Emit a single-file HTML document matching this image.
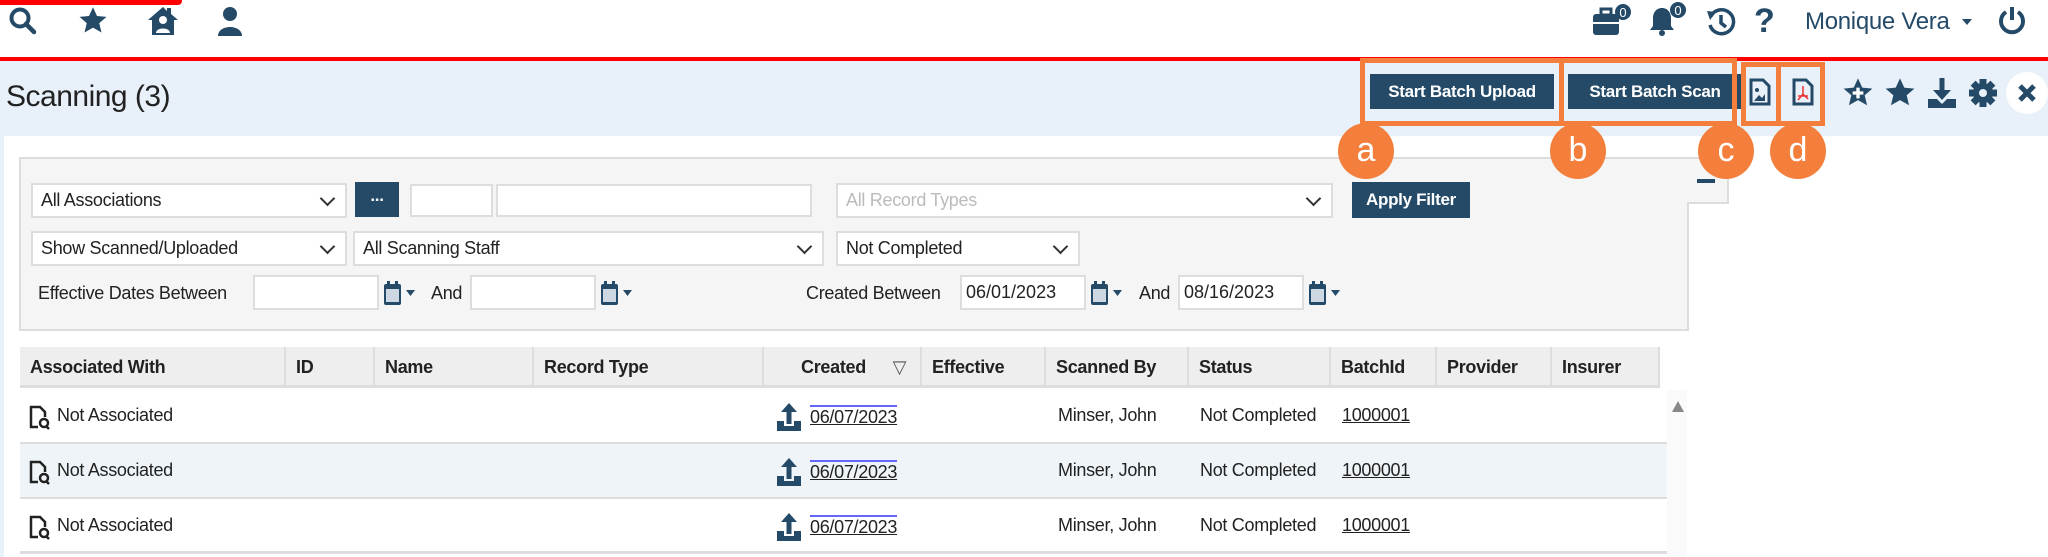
<!DOCTYPE html>
<html><head><meta charset="utf-8"><style>
*{box-sizing:border-box;margin:0;padding:0}
body{width:2048px;height:557px;overflow:hidden;background:#fff;font-family:"Liberation Sans Narrow","Liberation Sans",sans-serif;color:#222;position:relative}
.a{position:absolute}
.ic{fill:#244a68}
.sel{position:absolute;background:#fff;border:2px solid #ddd;font-size:18px;padding:0 8px;line-height:30px;color:#222;letter-spacing:-0.3px}
.sel:after{content:"";position:absolute;right:12px;top:8px;width:9px;height:9px;border-right:2px solid #333;border-bottom:2px solid #333;transform:rotate(45deg)}
.inp{position:absolute;background:#fff;border:2px solid #ddd;font-size:18px;padding:0 4px;line-height:30px}
.btn{position:absolute;background:#244a68;color:#fff;font-weight:bold;font-size:17px;text-align:center;font-family:"Liberation Sans",sans-serif;letter-spacing:-0.3px;white-space:nowrap}
.ob{position:absolute;border:5px solid #f47f3c}
.cir{position:absolute;width:56px;height:56px;border-radius:50%;background:#f47f3c;color:#fff;font-size:34px;text-align:center;line-height:54px;font-family:"Liberation Sans",sans-serif}
.lbl{position:absolute;font-size:18px;letter-spacing:-0.3px}
.th{position:absolute;top:347px;height:41px;line-height:41px;font-weight:bold;font-size:18px;border-right:2px solid #ddd;padding-left:10px;letter-spacing:-0.3px;white-space:nowrap}
.td{position:absolute;font-size:18px;letter-spacing:-0.3px;white-space:nowrap}
.u{text-decoration:underline}
</style></head><body>
<div class="a" style="left:0;top:0;width:182px;height:5px;background:#f00;border-radius:0 0 4px 0"></div>
<svg class="a" style="left:8px;top:6px" width="30" height="30" viewBox="0 0 30 30"><circle cx="12" cy="12" r="8.5" fill="none" stroke="#244a68" stroke-width="4"/><path d="M18 18l8 8" stroke="#244a68" stroke-width="4.5" stroke-linecap="round"/></svg>
<svg class="a" style="left:78px;top:6px" width="30" height="30" viewBox="0 0 24 24"><path class="ic" d="M12 1l3.2 7 7.6.7-5.8 5 1.8 7.5L12 17.3 5.2 21.2 7 13.7 1.2 8.7l7.6-.7z"/></svg>
<svg class="a" style="left:147px;top:6px" width="32" height="30" viewBox="0 0 32 30"><path class="ic" d="M16 1L1 14h4v15h22V14h4L24 8V2h-4v3z"/><circle cx="16" cy="14" r="4" fill="#fff"/><path d="M9 27c0-6 14-6 14 0z" fill="#fff"/></svg>
<svg class="a" style="left:216px;top:6px" width="28" height="30" viewBox="0 0 28 30"><circle class="ic" cx="14" cy="8" r="7"/><path class="ic" d="M2 30c0-12 24-12 24 0z"/></svg>
<svg class="a" style="left:1592px;top:4px" width="40" height="32" viewBox="0 0 40 32"><rect class="ic" x="1" y="10" width="26" height="21" rx="3"/><rect x="9" y="5" width="10" height="6" fill="none" stroke="#244a68" stroke-width="3"/><rect x="1" y="18" width="26" height="2" fill="#fff"/><circle cx="31" cy="8" r="8" fill="#244a68"/><text x="31" y="13" font-size="13" fill="#fff" text-anchor="middle" font-family="Liberation Sans">0</text></svg>
<svg class="a" style="left:1648px;top:2px" width="40" height="34" viewBox="0 0 40 34"><path class="ic" d="M14 6c-6 0-9 5-9 10v8l-3 4h24l-3-4v-8c0-5-3-10-9-10z"/><circle class="ic" cx="14" cy="31" r="3"/><circle cx="30" cy="8" r="8" fill="#244a68"/><text x="30" y="13" font-size="13" fill="#fff" text-anchor="middle" font-family="Liberation Sans">0</text></svg>
<svg class="a" style="left:1706px;top:7px" width="30" height="30" viewBox="0 0 30 30"><path d="M5 9a12 12 0 1 1-1 9" fill="none" stroke="#244a68" stroke-width="3.5"/><path class="ic" d="M1 4l9 1-6 8z"/><path d="M15 8v8l5 4" fill="none" stroke="#244a68" stroke-width="3.5"/></svg>
<div class="a" style="left:1754px;top:2px;font-size:34px;font-weight:bold;color:#244a68;font-family:'Liberation Sans',sans-serif">?</div>
<div class="a" style="left:1805px;top:8px;font-size:24px;color:#244a68;letter-spacing:-0.3px">Monique Vera</div>
<div class="a" style="left:1962px;top:19px;border-left:5px solid transparent;border-right:5px solid transparent;border-top:6px solid #244a68"></div>
<svg class="a" style="left:1997px;top:5px" width="30" height="32" viewBox="0 0 30 32"><path d="M9 7a11 11 0 1 0 12 0" fill="none" stroke="#244a68" stroke-width="4"/><path d="M15 2v13" stroke="#244a68" stroke-width="4"/></svg>
<div class="a" style="left:0;top:57px;width:2048px;height:4px;background:#f00"></div>
<div class="a" style="left:0;top:61px;width:2048px;height:75px;background:#e8f1f9"></div>
<div class="a" style="left:6px;top:80px;font-size:30px;color:#222;letter-spacing:-0.5px">Scanning (3)</div>
<div class="btn" style="left:1370px;top:74px;width:184px;height:35px;line-height:35px">Start Batch Upload</div>
<div class="btn" style="left:1568px;top:74px;width:174px;height:35px;line-height:35px">Start Batch Scan</div>
<svg class="a" style="left:1749px;top:78px" width="22" height="28" viewBox="0 0 22 28"><path d="M2 2h12l6 6v18H2z" fill="none" stroke="#244a68" stroke-width="3"/><path class="ic" d="M5 23l5-6 3 3 3-4v7H5z"/><circle class="ic" cx="8" cy="12" r="2"/></svg>
<svg class="a" style="left:1792px;top:78px" width="22" height="28" viewBox="0 0 22 28"><path d="M2 2h12l6 6v18H2z" fill="none" stroke="#244a68" stroke-width="3"/><path d="M11 8v8l-5 6M11 16l5 5M6 18h10" stroke="#e33" stroke-width="1.5" fill="none"/></svg>
<svg class="a" style="left:1842px;top:77px" width="32" height="32" viewBox="0 0 24 24"><path class="ic" d="M12 1l3.2 7 7.6.7-5.8 5 1.8 7.5L12 17.3 5.2 21.2 7 13.7 1.2 8.7l7.6-.7z"/><path d="M12 8v8M8 12h8" stroke="#fff" stroke-width="2.5"/></svg>
<svg class="a" style="left:1884px;top:77px" width="32" height="32" viewBox="0 0 24 24"><path class="ic" d="M12 1l3.2 7 7.6.7-5.8 5 1.8 7.5L12 17.3 5.2 21.2 7 13.7 1.2 8.7l7.6-.7z"/></svg>
<svg class="a" style="left:1927px;top:77px" width="30" height="32" viewBox="0 0 30 32"><path d="M15 1v18" stroke="#244a68" stroke-width="5"/><path class="ic" d="M6 13l9 10 9-10z"/><path class="ic" d="M1 22h9l5 5 5-5h9v9H1z"/></svg>
<svg class="a" style="left:1968px;top:78px" width="30" height="30" viewBox="0 0 30 30"><g transform="translate(15 15)"><circle r="10" class="ic"/><g class="ic"><rect x="-3.5" y="-14" width="7" height="28"/><rect x="-3.5" y="-14" width="7" height="28" transform="rotate(45)"/><rect x="-3.5" y="-14" width="7" height="28" transform="rotate(90)"/><rect x="-3.5" y="-14" width="7" height="28" transform="rotate(135)"/></g><circle r="4" fill="#e8f1f9"/></g></svg>
<div class="a" style="left:2006px;top:72px;width:42px;height:42px;border-radius:50%;background:#fff"></div>
<svg class="a" style="left:2016px;top:82px" width="22" height="22" viewBox="0 0 22 22"><path d="M4 4l14 14M18 4L4 18" stroke="#244a68" stroke-width="5"/></svg>
<div class="ob" style="left:1360px;top:58px;width:204px;height:68px"></div>
<div class="ob" style="left:1559px;top:58px;width:178px;height:68px"></div>
<div class="ob" style="left:1741px;top:62px;width:40px;height:64px"></div>
<div class="ob" style="left:1776px;top:62px;width:49px;height:64px"></div>
<div class="a" style="left:0;top:136px;width:4px;height:421px;background:#e8f1f9"></div>
<div class="a" style="left:19px;top:157px;width:1670px;height:174px;background:#f5f5f5;border:2px solid #ddd"></div>
<div class="a" style="left:1687px;top:157px;width:42px;height:47px;background:#f5f5f5;border:2px solid #ddd;border-left:none"></div>
<div class="a" style="left:1697px;top:179px;width:18px;height:4px;background:#244a68"></div>
<div class="cir" style="left:1338px;top:123px">a</div>
<div class="cir" style="left:1550px;top:123px">b</div>
<div class="cir" style="left:1698px;top:123px">c</div>
<div class="cir" style="left:1770px;top:123px">d</div>
<div class="sel" style="left:31px;top:183px;width:316px;height:35px">All Associations</div>
<div class="btn" style="left:355px;top:182px;width:44px;height:35px;line-height:28px">...</div>
<div class="inp" style="left:410px;top:184px;width:83px;height:33px"></div>
<div class="inp" style="left:496px;top:184px;width:316px;height:33px"></div>
<div class="sel" style="left:836px;top:183px;width:497px;height:35px;color:#bbb">All Record Types</div>
<div class="btn" style="left:1352px;top:182px;width:118px;height:36px;line-height:36px">Apply Filter</div>
<div class="sel" style="left:31px;top:231px;width:316px;height:35px">Show Scanned/Uploaded</div>
<div class="sel" style="left:353px;top:231px;width:471px;height:35px">All Scanning Staff</div>
<div class="sel" style="left:836px;top:231px;width:244px;height:35px">Not Completed</div>
<div class="lbl" style="left:38px;top:283px">Effective Dates Between</div>
<div class="inp" style="left:253px;top:275px;width:126px;height:35px"></div>
<div class="lbl" style="left:431px;top:283px">And</div>
<div class="inp" style="left:470px;top:275px;width:126px;height:35px"></div>
<div class="lbl" style="left:806px;top:283px">Created Between</div>
<div class="inp" style="left:960px;top:275px;width:126px;height:35px">06/01/2023</div>
<div class="lbl" style="left:1139px;top:283px">And</div>
<div class="inp" style="left:1178px;top:275px;width:126px;height:35px">08/16/2023</div>
<svg class="a" style="left:383px;top:280px" width="36" height="26" viewBox="0 0 36 26"><rect x="1" y="4" width="17" height="21" rx="2" fill="#244a68"/><rect x="3" y="9" width="13" height="13" fill="#cdd8e2"/><rect x="4" y="1" width="3" height="6" fill="#244a68"/><rect x="12" y="1" width="3" height="6" fill="#244a68"/><path d="M23 10h9l-4.5 6z" fill="#244a68"/></svg>
<svg class="a" style="left:600px;top:280px" width="36" height="26" viewBox="0 0 36 26"><rect x="1" y="4" width="17" height="21" rx="2" fill="#244a68"/><rect x="3" y="9" width="13" height="13" fill="#cdd8e2"/><rect x="4" y="1" width="3" height="6" fill="#244a68"/><rect x="12" y="1" width="3" height="6" fill="#244a68"/><path d="M23 10h9l-4.5 6z" fill="#244a68"/></svg>
<svg class="a" style="left:1090px;top:280px" width="36" height="26" viewBox="0 0 36 26"><rect x="1" y="4" width="17" height="21" rx="2" fill="#244a68"/><rect x="3" y="9" width="13" height="13" fill="#cdd8e2"/><rect x="4" y="1" width="3" height="6" fill="#244a68"/><rect x="12" y="1" width="3" height="6" fill="#244a68"/><path d="M23 10h9l-4.5 6z" fill="#244a68"/></svg>
<svg class="a" style="left:1308px;top:280px" width="36" height="26" viewBox="0 0 36 26"><rect x="1" y="4" width="17" height="21" rx="2" fill="#244a68"/><rect x="3" y="9" width="13" height="13" fill="#cdd8e2"/><rect x="4" y="1" width="3" height="6" fill="#244a68"/><rect x="12" y="1" width="3" height="6" fill="#244a68"/><path d="M23 10h9l-4.5 6z" fill="#244a68"/></svg>
<div class="a" style="left:20px;top:347px;width:1640px;height:41px;background:#eee;border-bottom:3px solid #ddd"></div>
<div class="th" style="left:20px;width:266px">Associated With</div>
<div class="th" style="left:286px;width:89px">ID</div>
<div class="th" style="left:375px;width:159px">Name</div>
<div class="th" style="left:534px;width:230px">Record Type</div>
<div class="th" style="left:764px;width:158px;padding-left:37px">Created <span style="font-weight:normal;color:#555;margin-left:22px">▽</span></div>
<div class="th" style="left:922px;width:124px">Effective</div>
<div class="th" style="left:1046px;width:143px">Scanned By</div>
<div class="th" style="left:1189px;width:142px">Status</div>
<div class="th" style="left:1331px;width:106px">BatchId</div>
<div class="th" style="left:1437px;width:115px">Provider</div>
<div class="th" style="left:1552px;width:108px">Insurer</div>
<div class="a" style="left:20px;top:390px;width:1647px;height:54px;border-bottom:2px solid #ddd"></div>
<div class="a" style="left:20px;top:444px;width:1647px;height:55px;background:#eef4f8;border-bottom:2px solid #ddd"></div>
<div class="a" style="left:20px;top:499px;width:1647px;height:55px;border-bottom:3px solid #ddd"></div>
<div class="a" style="left:1667px;top:390px;width:20px;height:167px;background:#fafafa"></div>
<div class="a" style="left:1672px;top:401px;border-left:6px solid transparent;border-right:6px solid transparent;border-bottom:11px solid #888"></div>
<div class="a" style="top:403px;left:0;width:2048px;height:30px">
<svg class="a" style="left:29px;top:2px" width="22" height="26" viewBox="0 0 22 26"><path d="M9 22H2V2h9l5 5v5" fill="none" stroke="#222" stroke-width="2.5"/><circle cx="15" cy="18" r="4" fill="none" stroke="#222" stroke-width="2.5"/><path d="M17 21l3 3" stroke="#222" stroke-width="2.5"/></svg>
<div class="td" style="left:57px;top:2px">Not Associated</div>
<svg class="a" style="left:776px;top:-1px" width="32" height="30" viewBox="0 0 32 30"><path d="M13 22V8" stroke="#244a68" stroke-width="5"/><path class="ic" d="M5 10l8-9 8 9z"/><path class="ic" d="M1 19h7v5h10v-5h7v10H1z"/></svg>
<div class="td u" style="left:810px;top:2px;border-top:2px solid #66f">06/07/2023</div>
<div class="td" style="left:1058px;top:2px">Minser, John</div>
<div class="td" style="left:1200px;top:2px">Not Completed</div>
<div class="td u" style="left:1342px;top:2px">1000001</div>
</div>
<div class="a" style="top:458px;left:0;width:2048px;height:30px">
<svg class="a" style="left:29px;top:2px" width="22" height="26" viewBox="0 0 22 26"><path d="M9 22H2V2h9l5 5v5" fill="none" stroke="#222" stroke-width="2.5"/><circle cx="15" cy="18" r="4" fill="none" stroke="#222" stroke-width="2.5"/><path d="M17 21l3 3" stroke="#222" stroke-width="2.5"/></svg>
<div class="td" style="left:57px;top:2px">Not Associated</div>
<svg class="a" style="left:776px;top:-1px" width="32" height="30" viewBox="0 0 32 30"><path d="M13 22V8" stroke="#244a68" stroke-width="5"/><path class="ic" d="M5 10l8-9 8 9z"/><path class="ic" d="M1 19h7v5h10v-5h7v10H1z"/></svg>
<div class="td u" style="left:810px;top:2px;border-top:2px solid #66f">06/07/2023</div>
<div class="td" style="left:1058px;top:2px">Minser, John</div>
<div class="td" style="left:1200px;top:2px">Not Completed</div>
<div class="td u" style="left:1342px;top:2px">1000001</div>
</div>
<div class="a" style="top:513px;left:0;width:2048px;height:30px">
<svg class="a" style="left:29px;top:2px" width="22" height="26" viewBox="0 0 22 26"><path d="M9 22H2V2h9l5 5v5" fill="none" stroke="#222" stroke-width="2.5"/><circle cx="15" cy="18" r="4" fill="none" stroke="#222" stroke-width="2.5"/><path d="M17 21l3 3" stroke="#222" stroke-width="2.5"/></svg>
<div class="td" style="left:57px;top:2px">Not Associated</div>
<svg class="a" style="left:776px;top:-1px" width="32" height="30" viewBox="0 0 32 30"><path d="M13 22V8" stroke="#244a68" stroke-width="5"/><path class="ic" d="M5 10l8-9 8 9z"/><path class="ic" d="M1 19h7v5h10v-5h7v10H1z"/></svg>
<div class="td u" style="left:810px;top:2px;border-top:2px solid #66f">06/07/2023</div>
<div class="td" style="left:1058px;top:2px">Minser, John</div>
<div class="td" style="left:1200px;top:2px">Not Completed</div>
<div class="td u" style="left:1342px;top:2px">1000001</div>
</div>
</body></html>
